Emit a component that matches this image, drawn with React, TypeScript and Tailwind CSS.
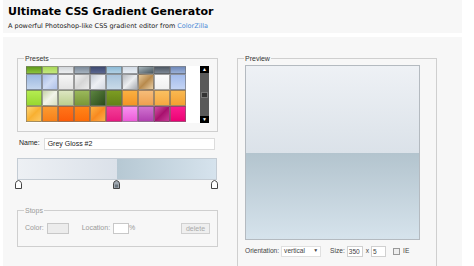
import { ReactNode } from 'react';

const rows: { h: string; cells: string[] }[] = [
  {
    h: 'h-[8px]',
    cells: [
      'bg-linear-to-b from-[#5f9a1a] to-[#8cc23a]',
      'bg-linear-to-b from-[#a9d858] to-[#c3e77c]',
      'bg-linear-to-b from-[#d2d6da] to-[#eceef0]',
      'bg-linear-to-b from-[#7c8a9a] to-[#a6b2be]',
      'bg-linear-to-b from-[#3e4a70] to-[#5a6690]',
      'bg-linear-to-b from-[#8dbad6] to-[#b0d0e4]',
      'bg-linear-to-b from-[#d2dbe6] to-[#e8eef4]',
      'bg-linear-to-br from-[#a8b6bc] to-[#4c5a62]',
      'bg-linear-to-b from-[#4e5864] to-[#7c8794]',
      'bg-linear-to-b from-[#6f88b8] to-[#9ab0d8]',
    ],
  },
  {
    h: 'h-[16px]',
    cells: [
      'bg-linear-to-b from-[#9cb8e0] to-[#c4d6ee]',
      'bg-linear-to-br from-[#a8bce6] via-[#d0dcf4] to-[#b0c2ea]',
      'bg-linear-to-b from-[#f6f6f6] to-[#e4e4e4]',
      'bg-linear-to-br from-[#f2f2f2] via-[#d6d6d6] to-[#ececec]',
      'bg-linear-to-br from-[#c6ccd6] via-[#eef0f4] to-[#d4d9e2]',
      'bg-linear-to-b from-[#a9c4dc] to-[#c8dae8]',
      'bg-linear-to-br from-[#b8bcc2] via-[#eceef0] to-[#a8acb2]',
      'bg-linear-to-br from-[#e4c89a] via-[#b88a4c] to-[#e8d0a8]',
      'bg-linear-to-b from-[#fbfbfb] to-[#f0f0f0]',
      'bg-linear-to-b from-[#a4bcec] to-[#c4d4f4]',
    ],
  },
  {
    h: 'h-[16px]',
    cells: [
      'bg-linear-to-b from-[#b4ec50] to-[#98d830]',
      'bg-linear-to-br from-[#c8d4a8] via-[#f2f4ea] to-[#d8e0c0]',
      'bg-linear-to-b from-[#dce6c0] to-[#bccf90]',
      'bg-linear-to-b from-[#9ab85a] to-[#7a9838]',
      'bg-linear-to-br from-[#5c8440] to-[#2c4c1c]',
      'bg-linear-to-b from-[#7c9c22] to-[#648218]',
      'bg-linear-to-b from-[#fbb040] to-[#f49424]',
      'bg-linear-to-b from-[#f6bc78] to-[#eea050]',
      'bg-linear-to-b from-[#fac060] to-[#f6a840]',
      'bg-linear-to-b from-[#f8b850] to-[#f4a030]',
    ],
  },
  {
    h: 'h-[16px]',
    cells: [
      'bg-linear-to-br from-[#fcd470] via-[#f8b030] to-[#fcc860]',
      'bg-linear-to-b from-[#fb9a30] to-[#f88018]',
      'bg-linear-to-b from-[#ff7418] to-[#fc5c08]',
      'bg-linear-to-b from-[#ff8418] to-[#fc6c08]',
      'bg-linear-to-br from-[#fcb040] via-[#f88a20] to-[#fcae48]',
      'bg-linear-to-b from-[#f23c98] to-[#e81880]',
      'bg-linear-to-b from-[#f890f0] to-[#ec5ad8]',
      'bg-linear-to-b from-[#d070d0] to-[#b040b0]',
      'bg-linear-to-br from-[#d04aa8] via-[#a8106e] to-[#c83898]',
      'bg-linear-to-b from-[#fa1c90] to-[#ec0074]',
    ],
  },
];

function Box({ legend, className, children }: { legend: string; className: string; children: ReactNode }) {
  return (
    <fieldset className={`border border-[#cfcfcf] ${className}`}>
      <legend className="ml-[6px] px-[1px] text-[7px] leading-[9px]">{legend}</legend>
      {children}
    </fieldset>
  );
}

function StopMarker({ dark }: { dark?: boolean }) {
  return (
    <svg width="7" height="9" viewBox="0 0 7 9">
      <path
        d="M0.5 8.5 V3.8 Q0.5 2 2 1.2 L3.5 0.5 L5 1.2 Q6.5 2 6.5 3.8 V8.5 Z"
        fill={dark ? '#a0a8b0' : '#ffffff'}
        stroke="#444"
        strokeWidth="1"
      />
      {dark && <rect x="2" y="4.5" width="3" height="3" fill="#6c767e" />}
    </svg>
  );
}

export default function App() {
  return (
    <div className="w-[474px] h-[266px] overflow-hidden bg-white text-[#333] font-['Liberation_Sans',Arial,sans-serif]">
      <div className="ml-[3px] w-[459px] h-[33px] bg-[#f7f7f7] pl-[5px] pt-[5px]">
        <h1 className="font-['DejaVu_Sans',Verdana,sans-serif] font-bold text-[11px] leading-[14px] text-black">
          Ultimate CSS Gradient Generator
        </h1>
        <p className="mt-[3px] font-['DejaVu_Sans',Verdana,sans-serif] text-[6.5px] leading-[8px] text-[#222]">
          A powerful Photoshop-like CSS gradient editor from <span className="text-[#4a8ad6]">ColorZilla</span>
        </p>
      </div>

      <div className="mt-[4px] ml-[3px] w-[459px] h-[229px] bg-[#f7f7f7] flex pt-[17px]">
        {/* left column */}
        <div className="ml-[14px] w-[201px]">
          <Box legend="Presets" className="h-[78px]">
            <div className="flex ml-[8px] mt-[3px] w-[183px] h-[57px] bg-white">
              <div className="flex flex-col w-[160px]">
                {rows.map((r, i) => (
                  <div key={i} className={`flex ${r.h}`}>
                    {r.cells.map((c, j) => (
                      <div key={j} className={`w-[16px] h-full border border-[#6b6b6b]/60 ${c}`} />
                    ))}
                  </div>
                ))}
              </div>
              <div className="ml-auto w-[9px] h-full flex flex-col bg-[#5a5a5a]">
                <div className="h-[7px] bg-black flex items-center justify-center text-white text-[5px] leading-none">▲</div>
                <div className="flex-1 flex items-center justify-center">
                  <div className="w-[7px] h-[6px] bg-[#333] border border-[#777]" />
                </div>
                <div className="h-[7px] bg-black flex items-center justify-center text-white text-[5px] leading-none">▼</div>
              </div>
            </div>
          </Box>

          <div className="mt-[5px] flex items-center h-[13px]">
            <span className="ml-[2px] text-[7px] text-[#222]">Name:</span>
            <div className="ml-[4px] w-[171px] h-[12px] bg-white border border-[#dcdcdc] pl-[3px] text-[7px] leading-[10px] text-[#222]">
              Grey Gloss #2
            </div>
          </div>

          <div className="mt-[8px] w-[200px] h-[22px] border border-[#c4ccd4] flex">
            <div className="w-1/2 h-full bg-linear-to-r from-[#edf0f4] to-[#dbe1e9]" />
            <div className="w-1/2 h-full bg-linear-to-r from-[#b6c8d3] to-[#d6e3ed]" />
          </div>
          <div className="flex justify-between w-[203px] -ml-[2px] h-[10px]">
            <StopMarker />
            <StopMarker dark />
            <StopMarker />
          </div>

          <Box legend="Stops" className="mt-[16px] h-[41px] text-[#999]">
            <div className="flex items-center h-[26px] px-[7px] text-[7px]">
              <span>Color:</span>
              <div className="ml-[3px] w-[22px] h-[11px] bg-[#ececec] border border-[#c8c8c8]" />
              <span className="ml-[13px]">Location:</span>
              <div className="ml-[3px] w-[16px] h-[11px] bg-white border border-[#c8c8c8]" />
              <span>%</span>
              <div className="ml-auto w-[29px] h-[11px] bg-[#efefef] border border-[#d0d0d0] text-[#aaa] text-[7px] leading-[9px] text-center">
                delete
              </div>
            </div>
          </Box>
        </div>

        {/* right column */}
        <div className="ml-[19px] w-[200px]">
          <Box legend="Preview" className="h-[232px] text-[#333]">
            <div className="ml-[7px] mt-[2px] w-[175px] h-[175px] border border-[#b4bac0] flex flex-col">
              <div className="h-1/2 bg-linear-to-b from-[#eef1f5] to-[#dbe2e9]" />
              <div className="h-1/2 bg-linear-to-b from-[#b3c4ce] to-[#d6e3ec]" />
            </div>
            <div className="ml-[7px] mt-[5px] flex items-center h-[12px] text-[6.6px] text-[#444]">
              <span>Orientation:</span>
              <div className="ml-[2px] w-[40px] h-[11px] bg-white border border-[#e0e0e0] flex items-center px-[2px]">
                <span>vertical</span>
                <span className="ml-auto text-[5px]">▼</span>
              </div>
              <span className="ml-[9px]">Size:</span>
              <div className="ml-[2px] w-[16px] h-[11px] bg-white border border-[#d0d0d0] pl-[1px] leading-[9px]">350</div>
              <span className="ml-[3px]">x</span>
              <div className="ml-[2px] w-[15px] h-[11px] bg-white border border-[#d0d0d0] pl-[1px] leading-[9px]">5</div>
              <div className="ml-[7px] w-[7px] h-[7px] bg-[#eee] border border-[#999]" />
              <span className="ml-[3px]">IE</span>
            </div>
          </Box>
        </div>
      </div>
    </div>
  );
}
